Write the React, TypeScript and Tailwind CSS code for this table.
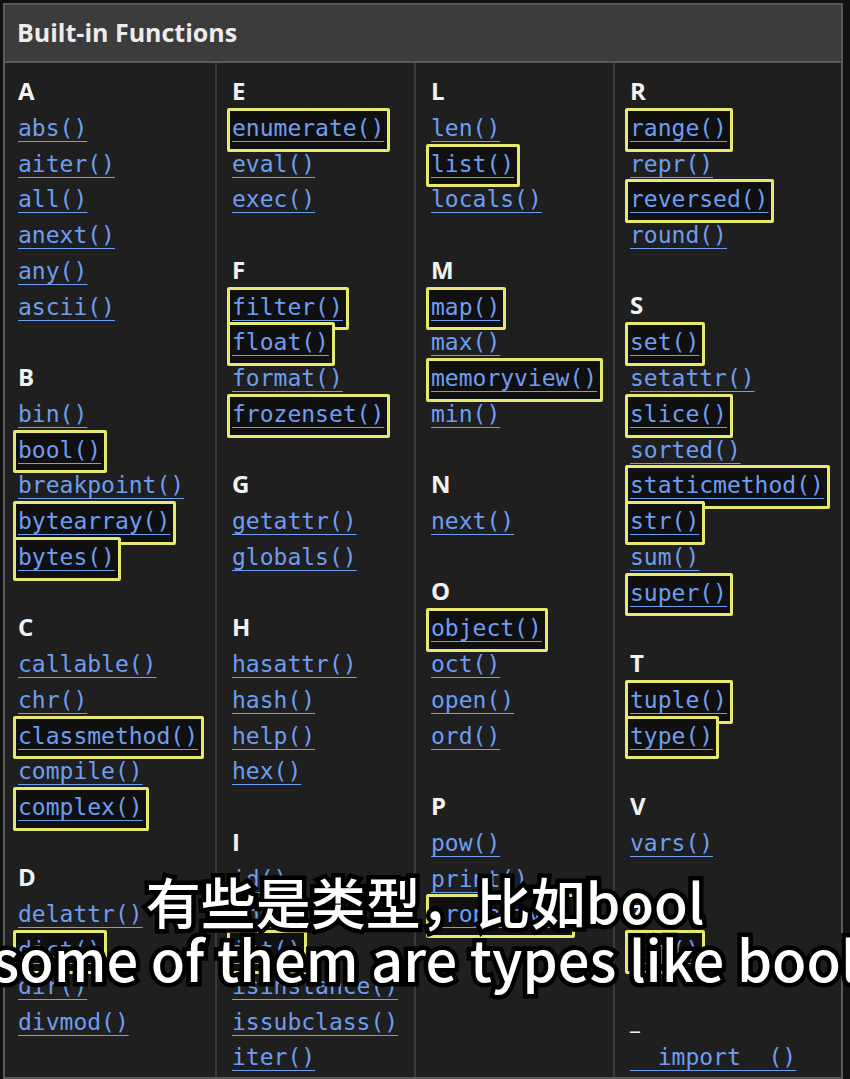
import React from "react";

type Row = { h?: string; f?: string; box?: boolean } | null;

const h = (t: string): Row => ({ h: t });
const f = (t: string, box = false): Row => ({ f: t, box });

const COLUMNS: { cls: string; rows: Row[] }[] = [
  {
    cls: "pl-[13px]",
    rows: [
      h("A"), f("abs()"), f("aiter()"), f("all()"), f("anext()"), f("any()"), f("ascii()"), null,
      h("B"), f("bin()"), f("bool()", true), f("breakpoint()"), f("bytearray()", true), f("bytes()", true), null,
      h("C"), f("callable()"), f("chr()"), f("classmethod()", true), f("compile()"), f("complex()", true), null,
      h("D"), f("delattr()"), f("dict()", true), f("dir()"), f("divmod()"),
    ],
  },
  {
    cls: "pl-[15px] border-l-2 border-[#3a3a3a]",
    rows: [
      h("E"), f("enumerate()", true), f("eval()"), f("exec()"), null,
      h("F"), f("filter()", true), f("float()", true), f("format()"), f("frozenset()", true), null,
      h("G"), f("getattr()"), f("globals()"), null,
      h("H"), f("hasattr()"), f("hash()"), f("help()"), f("hex()"), null,
      h("I"), f("id()"), f("input()"), f("int()", true), f("isinstance()"), f("issubclass()"), f("iter()"),
    ],
  },
  {
    cls: "pl-[15px] border-l-2 border-[#3a3a3a]",
    rows: [
      h("L"), f("len()"), f("list()", true), f("locals()"), null,
      h("M"), f("map()", true), f("max()"), f("memoryview()", true), f("min()"), null,
      h("N"), f("next()"), null,
      h("O"), f("object()", true), f("oct()"), f("open()"), f("ord()"), null,
      h("P"), f("pow()"), f("print()"), f("property()", true),
    ],
  },
  {
    cls: "pl-[15px] border-l-2 border-[#3a3a3a]",
    rows: [
      h("R"), f("range()", true), f("repr()"), f("reversed()", true), f("round()"), null,
      h("S"), f("set()", true), f("setattr()"), f("slice()", true), f("sorted()"), f("staticmethod()", true),
      f("str()", true), f("sum()"), f("super()", true), null,
      h("T"), f("tuple()", true), f("type()", true), null,
      h("V"), f("vars()"), null,
      h("Z"), f("zip()", true), null,
      h("_"), f("__import__()"),
    ],
  },
];

function Item({ row }: { row: Row }) {
  if (!row) return <div className="h-[35.75px]" />;
  if (row.h)
    return (
      <div className="flex h-[35.75px] items-center font-['Open_Sans',sans-serif] text-[24px] font-bold text-[#f2f2f2]">
        {row.h}
      </div>
    );
  return (
    <div className="flex h-[35.75px] items-center">
      <span className="relative inline-block translate-y-[3px] leading-[35.75px]">
        {row.box && (
          <span className="absolute -bottom-[3px] -left-[5px] -right-[6px] -top-[3px] rounded-[2px] border-[3px] border-[#e6e870] bg-[#101010]" />
        )}
        <span className="relative font-['DejaVu_Sans_Mono',monospace] text-[23px] text-[#6e9ef0] underline decoration-[#6e9ef0] decoration-1 underline-offset-[5px]">
          {row.f}
        </span>
      </span>
    </div>
  );
}

export default function App() {
  return (
    <div className="relative h-[1079px] w-[850px] overflow-hidden bg-[#121212] pl-[3px] pt-[3px]">
      <div className="flex h-[1076px] w-[840px] flex-col border-2 border-[#5a5a5a] bg-[#1f1f1f]">
        <div className="flex h-[58px] items-center border-b-2 border-[#5a5a5a] bg-[#3c3c3c] px-[12px] font-['Open_Sans',sans-serif] text-[25px] font-bold text-[#ececec]">
          Built-in Functions
        </div>
        <div className="grid flex-1 grid-cols-[210px_199px_199px_1fr]">
          {COLUMNS.map((col, i) => (
            <div key={i} className={`pt-[10px] ${col.cls}`}>
              {col.rows.map((r, j) => (
                <Item key={j} row={r} />
              ))}
            </div>
          ))}
        </div>
      </div>

      {/* subtitle overlay */}
      <div className="absolute left-1/2 top-[866px] flex -translate-x-1/2 flex-col items-center whitespace-nowrap font-['Noto_Sans_CJK_SC','Noto_Sans',sans-serif] font-medium text-white [-webkit-text-stroke:9px_#000] [paint-order:stroke_fill]">
        <div className="text-[55px] leading-[68px]">有些是类型，比如bool</div>
        <div className="-mt-[10px] text-[56px] leading-[68px]">some of them are types like bool</div>
      </div>
    </div>
  );
}
